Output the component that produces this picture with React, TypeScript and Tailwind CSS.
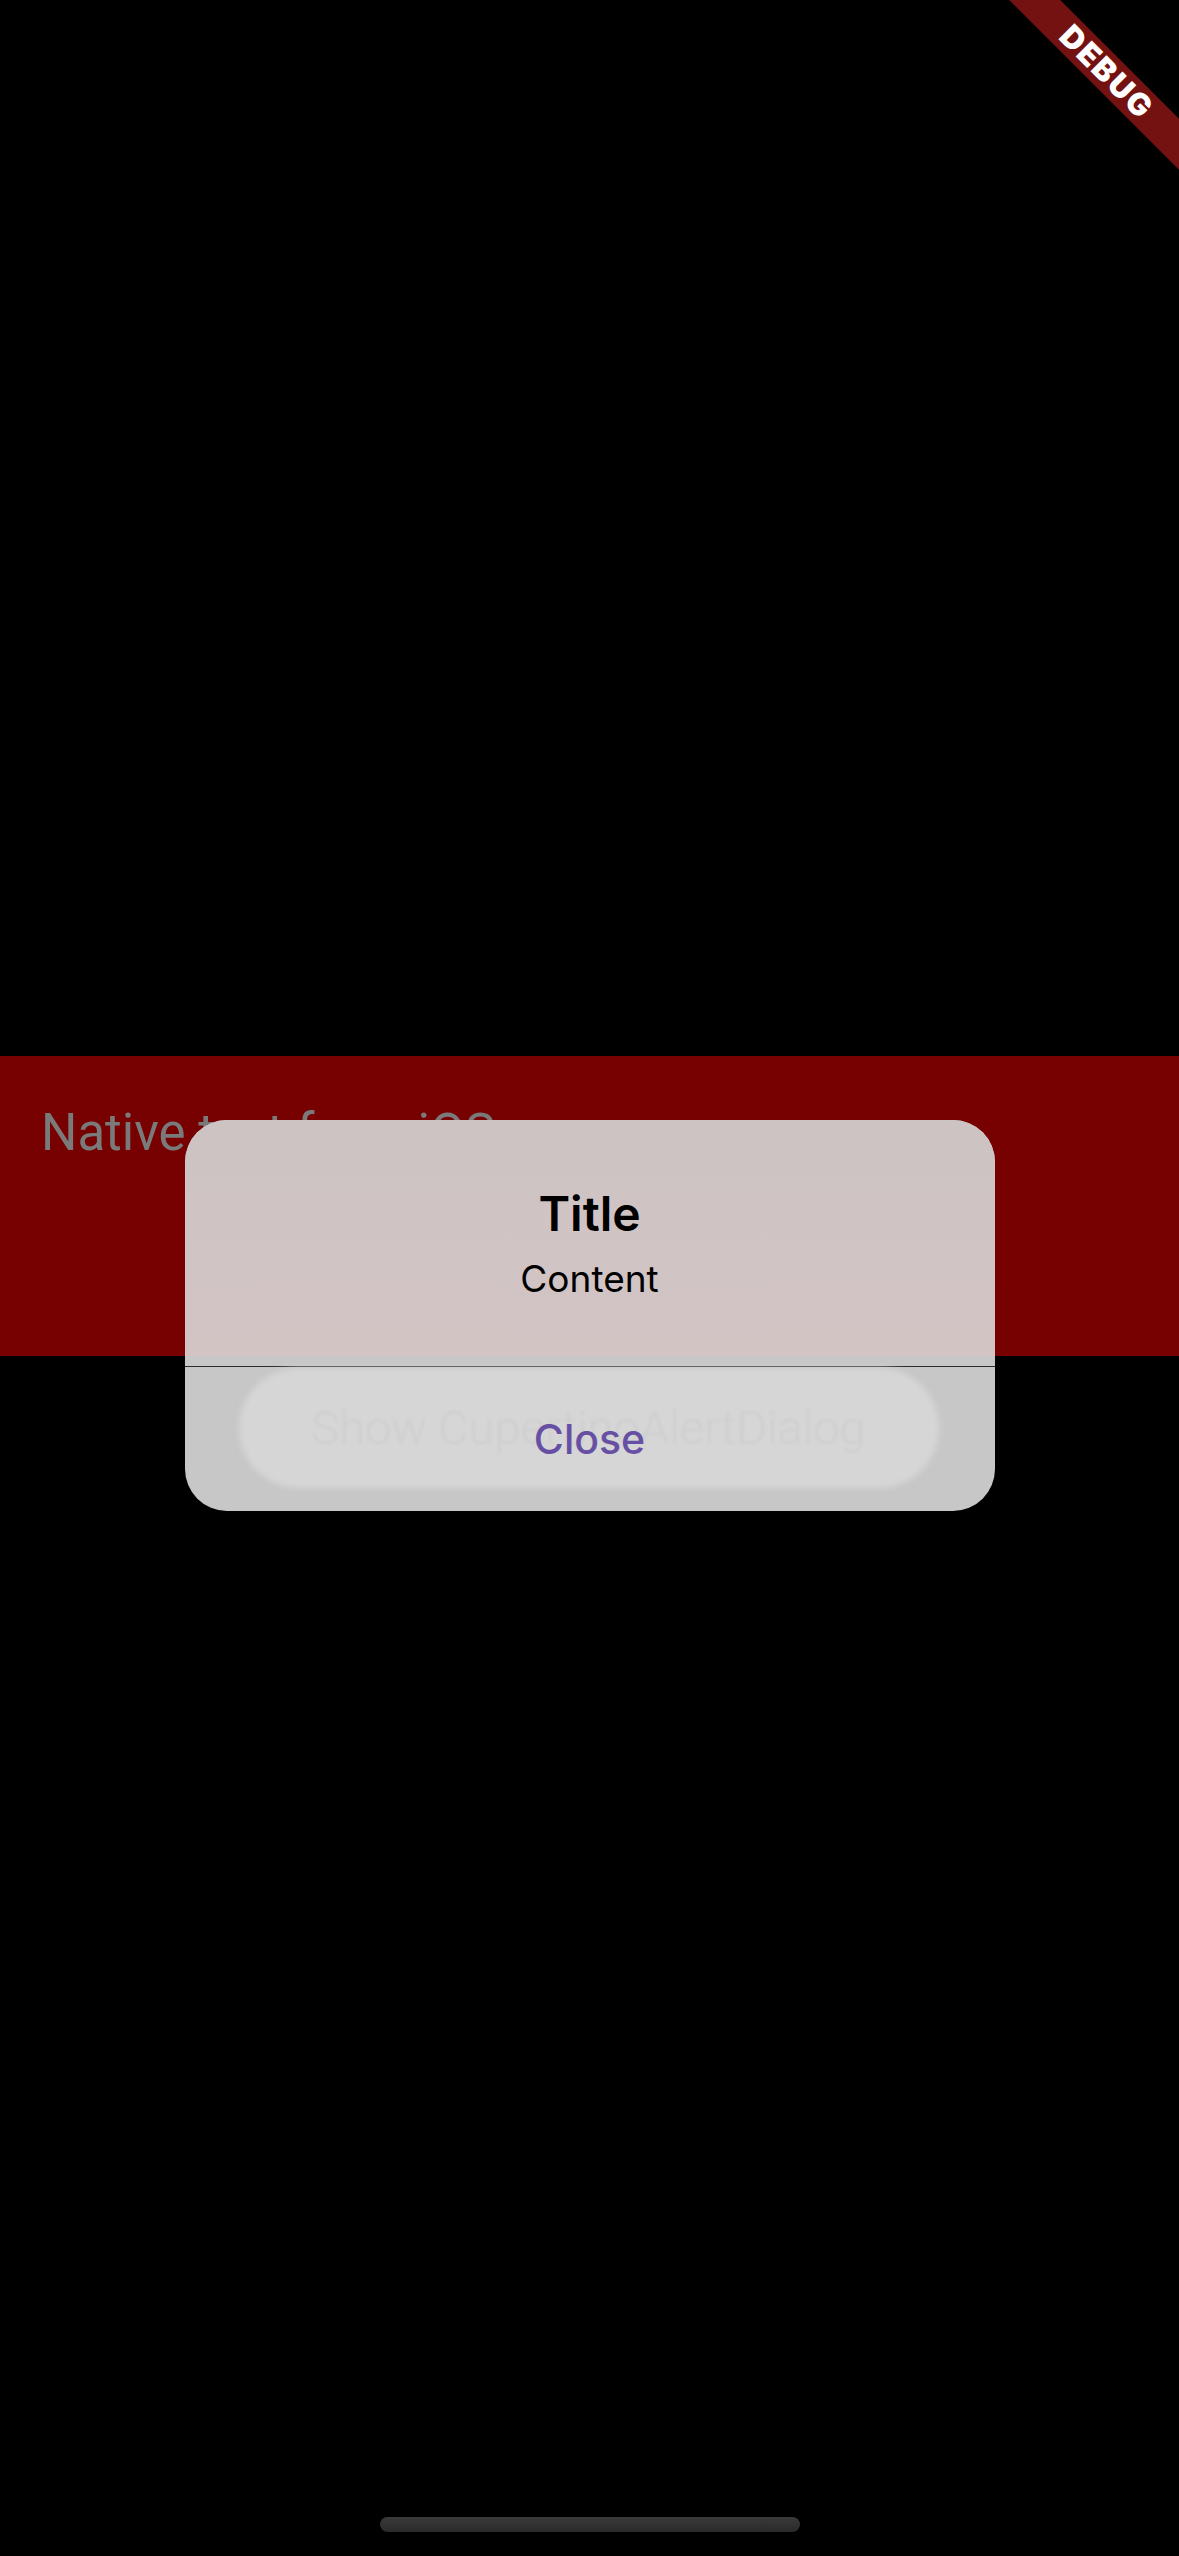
export default function App() {
  return (
    <div className="relative w-[1179px] h-[2556px] bg-black overflow-hidden flex flex-col font-['Inter','Liberation_Sans',sans-serif]">
      {/* native platform view */}
      <div className="mt-[1056px] h-[300px] bg-[#770000] pl-[41px] pt-[47px]">
        <div className="font-['Roboto','Liberation_Sans',sans-serif] text-[51px] leading-[60px] text-[#7a7a7a]">
          Native text from iOS
        </div>
      </div>

      {/* home indicator */}
      <div className="mt-auto mb-[24px] self-center w-[420px] h-[15px] rounded-full bg-gradient-to-b from-[#3a3a3a] to-[#2a2a2a]" />

      {/* dialog overlay */}
      <div className="absolute inset-0 flex justify-center pt-[1120px]">
        <div className="w-[810px] h-[391px] rounded-[42px] overflow-hidden bg-[#c7c7c7] flex flex-col">
          <div className="h-[246px] flex flex-col text-black">
            {/* red band showing through the frosted panel */}
            <div className="h-[236px] bg-gradient-to-b from-[#cdc3c3] to-[#d3c4c4] flex flex-col items-center pt-[65px]">
              <div className="text-[48px] leading-[58px] font-semibold">Title</div>
              <div className="mt-[13px] text-[37px] leading-[45px]">Content</div>
            </div>
          </div>
          <div className="h-px bg-[#2b2b2b]" />
          <div className="relative flex-1 flex items-center justify-center">
            <div className="absolute left-[54px] right-[56px] top-[1px] h-[120px] rounded-full bg-[#d6d6d6] blur-[3px]" />
            <div className="absolute left-[54px] right-[56px] top-[1px] h-[120px] flex items-center justify-center blur-[1px]">
              <span className="font-['Roboto','Liberation_Sans',sans-serif] font-light text-[47px] text-[#cfcfcf]">
                Show CupertinoAlertDialog
              </span>
            </div>
            <span className="relative text-[41px] leading-[48px] font-medium text-[#6750a4]">Close</span>
          </div>
        </div>
      </div>

      {/* debug banner */}
      <div className="absolute top-0 right-0 w-0 h-0 origin-top-left rotate-45">
        <div className="absolute left-[-120px] top-[84px] w-[240px] h-[36px] bg-[rgba(183,28,28,0.63)] flex items-center justify-center">
          <span className="text-white text-[31px] leading-[36px] font-black tracking-[2px]">DEBUG</span>
        </div>
      </div>
    </div>
  )
}
